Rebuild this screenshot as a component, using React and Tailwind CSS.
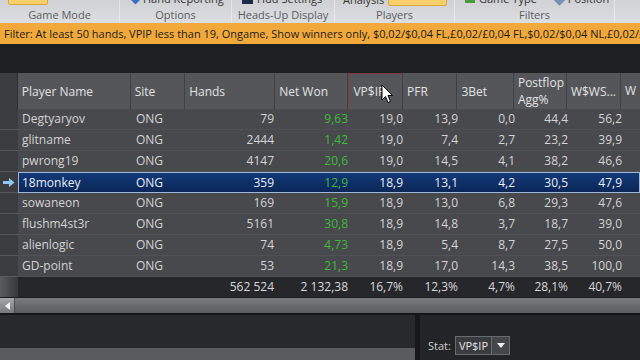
const rows = [
  ['Degtyaryov', 'ONG', '79', '9,63', '19,0', '13,9', '0,0', '44,4', '56,2'],
  ['glitname', 'ONG', '2444', '1,42', '19,0', '7,4', '2,7', '23,2', '39,9'],
  ['pwrong19', 'ONG', '4147', '20,6', '19,0', '14,5', '4,1', '38,2', '46,6'],
  ['18monkey', 'ONG', '359', '12,9', '18,9', '13,1', '4,2', '30,5', '47,9'],
  ['sowaneon', 'ONG', '169', '15,9', '18,9', '13,0', '6,8', '29,3', '47,6'],
  ['flushm4st3r', 'ONG', '5161', '30,8', '18,9', '14,8', '3,7', '18,7', '39,0'],
  ['alienlogic', 'ONG', '74', '4,73', '18,9', '5,4', '8,7', '27,5', '50,0'],
  ['GD-point', 'ONG', '53', '21,3', '18,9', '17,0', '14,3', '38,5', '100,0'],
];

const widths = ['w-[114px]', 'w-[55px]', 'w-[91px]', 'w-[74px]', 'w-[55px]', 'w-[55px]', 'w-[57px]', 'w-[53px]', 'w-[54px]'];

function Cursor() {
  return (
    <svg className="absolute left-[381px] top-[84px]" width="13" height="20" viewBox="0 0 13 20">
      <path d="M1 1 L1 16 L4.5 12.5 L7 18.5 L9.5 17.5 L7 11.5 L11.5 11.5 Z" fill="#fff" stroke="#000" strokeWidth="1" />
    </svg>
  );
}

function Ribbon() {
  const groups = [
    { label: 'Game Mode', w: 'w-[120px]', top: <div className="ml-[8px] w-[40px] h-[6px] -mt-[1px] bg-[#f7cf6b] border border-[#d9a93c] rounded-b-[2px]" /> },
    { label: 'Options', w: 'w-[112px]', top: (
      <div className="flex items-center gap-[4px] ml-[12px] -mt-[8px] h-[14px] text-[#333]">
        <span className="w-[7px] h-[7px] rotate-45 bg-[#3a6fc4]" />
        <span>Hand Reporting</span>
      </div>
    ) },
    { label: 'Heads-Up Display', w: 'w-[103px]', top: (
      <div className="flex items-center gap-[4px] ml-[10px] -mt-[8px] h-[14px] text-[#333]">
        <span className="w-[11px] h-[10px] bg-[#1d2a48]" />
        <span>Hud Settings</span>
      </div>
    ) },
    { label: 'Players', w: 'w-[120px]', top: (
      <div className="flex items-start gap-[4px] ml-[8px] -mt-[8px] h-[14px] text-[#333]">
        <span>Analysis</span>
        <span className="w-[59px] h-[13px] mt-[1px] bg-[#f7cf6b] border border-[#d9a93c] rounded-b-[2px]" />
      </div>
    ) },
    { label: 'Filters', w: 'w-[160px]', top: (
      <div className="flex items-center gap-[4px] ml-[10px] -mt-[8px] h-[14px] text-[#333]">
        <span className="w-[10px] h-[8px] bg-[#4a9a3c]" />
        <span>Game Type</span>
        <span className="ml-[14px] w-[9px] h-[9px] rotate-45 bg-[#7a8fb0]" />
        <span>Position</span>
      </div>
    ) },
  ];
  return (
    <div className="h-[23px] flex bg-[#d4d6d9] text-[11px] overflow-hidden">
      {groups.map((g) => (
        <div key={g.label} className={`${g.w} h-full flex flex-col border-r border-[#e6e7e9] bg-gradient-to-b from-[#cfd1d4] to-[#dcdee1]`}>
          <div className="h-[6px] overflow-visible">{g.top}</div>
          <div className="flex-1 flex items-center justify-center text-[#5b5d61] leading-none pb-[1px]">{g.label}</div>
        </div>
      ))}
      <div className="flex-1 bg-gradient-to-b from-[#cfd1d4] to-[#dcdee1]" />
    </div>
  );
}

export default function App() {
  const headers = ['Player Name', 'Site', 'Hands', 'Net Won', 'VP$IP', 'PFR', '3Bet', 'Postflop Agg%', 'W$WS...'];
  const totals = ['', '', '562 524', '2 132,38', '16,7%', '12,3%', '4,7%', '28,1%', '40,7%'];
  return (
    <div className="relative w-[640px] h-[360px] overflow-hidden flex flex-col bg-[#1f2023]" style={{ fontFamily: '"Open Sans", "Noto Sans", sans-serif' }}>
      <Ribbon />
      <div className="h-[21px] bg-[#f2a93b] text-[#1c1c1c] text-[11px] leading-[21px] px-[4px] whitespace-nowrap overflow-hidden">
        Filter: At least 50 hands, VPIP less than 19, Ongame, Show winners only, $0,02/$0,04 FL,£0,02/£0,04 FL,$0,02/$0,04 NL,£0,02/£0,04 NL,£0,02/£0,04 PL
      </div>
      <div className="h-[29px] bg-[#1e1f22]" />

      {/* header */}
      <div className="h-[36px] flex text-[12px] text-[#e2e2e2] bg-[#54565a]">
        <div className="w-[18px] bg-[#3c3d41] border-r border-[#2e2f33]" />
        {headers.map((h, i) => (
          <div
            key={h}
            className={`${widths[i]} flex items-center px-[4px] leading-[17px] border-r border-[#3f4145] ${i === 4 ? 'border-l border-t border-l-[#8a3a42] border-t-[#7a3a40]' : ''}`}
          >
            {i === 7 ? <span>Postflop<br />Agg%</span> : h}
          </div>
        ))}
        <div className="flex-1 flex items-center px-[4px]">W</div>
      </div>

      {/* rows */}
      {rows.map((r, ri) => {
        const sel = ri === 3;
        return (
          <div key={r[0]} className="h-[21px] flex text-[12px]">
            <div className="w-[18px] bg-[#3b3c40] border-b border-[#56585c] flex items-center justify-center">
              {sel && (
                <svg width="12" height="9" viewBox="0 0 12 9">
                  <path d="M0 3 H6 V0 L11.5 4.5 L6 9 V6 H0 Z" fill="#8cc8f0" />
                </svg>
              )}
            </div>
            <div className={`flex-1 flex items-center ${sel ? 'bg-gradient-to-b from-[#123a7a] to-[#0b2656] outline outline-1 -outline-offset-1 outline-[#9fb6d6] text-[#e8eef8]' : 'bg-[#47494d] border-b border-[#4f5155] text-[#d4d4d4]'}`}>
              {r.map((c, ci) => (
                <div
                  key={ci}
                  className={`${widths[ci]} px-[4px] ${ci < 2 ? 'text-left' : 'text-right'} ${ci === 3 ? 'text-[#3cb936]' : ''}`}
                >
                  {c}
                </div>
              ))}
            </div>
          </div>
        );
      })}

      {/* totals */}
      <div className="h-[20px] flex text-[12px] text-[#d8d8d8] bg-[#26272b]">
        <div className="w-[18px] bg-gradient-to-r from-[#5b5c60] to-[#36373b]" />
        {totals.map((t, i) => (
          <div key={i} className={`${widths[i]} px-[4px] text-right leading-[20px]`}>{t}</div>
        ))}
      </div>

      {/* scrollbar */}
      <div className="h-[16px] flex border-t border-[#1a1b1d] bg-gradient-to-b from-[#7a7b7e] to-[#5c5d60]">
        <div className="w-[15px] h-full bg-gradient-to-b from-[#a6a7aa] to-[#77787b] flex items-center justify-center border-r border-[#4a4b4e]">
          <svg width="5" height="8" viewBox="0 0 5 8"><path d="M5 0 V8 L0 4 Z" fill="#f2f2f2" /></svg>
        </div>
        <div className="flex-1" />
      </div>
      <div className="h-[2px] bg-[#141517]" />

      {/* lower panels */}
      <div className="flex-1 flex">
        <div className="w-[415px] flex flex-col">
          <div className="flex-1 bg-[#28292c]" />
          <div className="h-[12px] bg-[#5a5b5f]" />
        </div>
        <div className="w-[5px] bg-[#161719]" />
        <div className="flex-1 bg-[#232427] flex items-end pb-[5px] pl-[8px] gap-[4px] text-[11px]">
          <span className="text-[#d0d0d0] leading-[19px]">Stat:</span>
          <div className="h-[19px] flex border border-[#6a6b6f]">
            <div className="px-[3px] bg-[#3a3b3f] text-[#e4e4e4] leading-[17px] border-r border-[#6a6b6f]">VP$IP</div>
            <div className="w-[17px] bg-[#45464a] flex items-center justify-center">
              <svg width="8" height="5" viewBox="0 0 8 5"><path d="M0 0 H8 L4 5 Z" fill="#f0f0f0" /></svg>
            </div>
          </div>
        </div>
      </div>

      <Cursor />
    </div>
  );
}
